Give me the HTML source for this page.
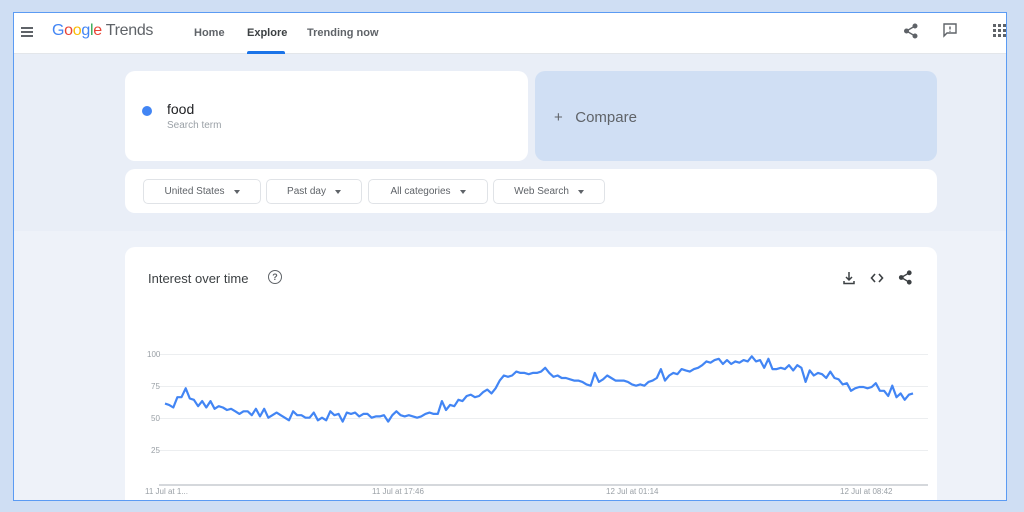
<!DOCTYPE html>
<html><head><meta charset="utf-8"><style>
*{box-sizing:border-box;margin:0;padding:0}
body{width:1024px;height:512px;background:#cfdef3;font-family:"Liberation Sans",sans-serif;position:relative;overflow:hidden}
#frame{position:absolute;left:13px;top:12px;width:994px;height:489px;border:1px solid #5b9bf3;background:#eef2f9;overflow:hidden}
#hdr{position:absolute;left:0;top:0;width:100%;height:41px;background:#fff;border-bottom:1px solid #e3e6ea}
#top{position:absolute;left:0;top:41px;width:100%;height:177px;background:#e9eef7}
.abs{position:absolute}
.nav{position:absolute;top:14px;font-size:11px;color:#5f6368;font-weight:bold}
.card{position:absolute;background:#fff;border-radius:10px}
.btn{position:absolute;top:166px;height:25px;border:1px solid #e0e3e7;border-radius:5px;font-size:10px;color:#5f6368;display:flex;align-items:center;justify-content:center}
.btn:after{content:"";border:3.5px solid transparent;border-top:4px solid #5f6368;margin-left:9px;margin-top:4px}
.ax{position:absolute;font-size:8px;color:#9aa0a6}
.gl{position:absolute;left:145px;width:769px;height:1px;background:#eceef0}
</style></head><body>
<div id="frame">
<div id="hdr">
 <div class="abs" style="left:7px;top:14px;width:12px;height:2px;background:#5f6368;box-shadow:0 4px 0 #5f6368,0 8px 0 #5f6368"></div>
 <div class="abs" style="left:38px;top:9px;font-size:16px;letter-spacing:-0.3px"><span style="color:#4285f4">G</span><span style="color:#ea4335">o</span><span style="color:#fbbc05">o</span><span style="color:#4285f4">g</span><span style="color:#34a853">l</span><span style="color:#ea4335">e</span> <span style="color:#5f6368">Trends</span></div>
 <div class="nav" style="left:180px">Home</div>
 <div class="nav" style="left:233px;color:#3c4043">Explore</div>
 <div class="abs" style="left:233px;top:38px;width:38px;height:3px;background:#1a73e8;border-radius:2px 2px 0 0"></div>
 <div class="nav" style="left:293px">Trending now</div>
 <svg class="abs" style="left:889px;top:10px" width="16" height="16" viewBox="0 0 16 16" fill="none" stroke="#5f6368" stroke-width="1.4"><circle cx="12" cy="3" r="1.8" fill="#5f6368"/><circle cx="3.5" cy="8" r="1.8" fill="#5f6368"/><circle cx="12" cy="13" r="1.8" fill="#5f6368"/><path d="M12 3L3.5 8 12 13"/></svg>
 <svg class="abs" style="left:928px;top:9px" width="16" height="16" viewBox="0 0 16 16" fill="none" stroke="#5f6368" stroke-width="1.4"><path d="M2 2h12v9H5l-3 3z"/><path d="M8 4.5v3M8 8.8v1" /></svg>
 <svg class="abs" style="left:979px;top:11px" width="14" height="14" viewBox="0 0 14 14" fill="#5f6368"><rect x="0" y="0" width="3" height="3"/><rect x="5" y="0" width="3" height="3"/><rect x="10" y="0" width="3" height="3"/><rect x="0" y="5" width="3" height="3"/><rect x="5" y="5" width="3" height="3"/><rect x="10" y="5" width="3" height="3"/><rect x="0" y="10" width="3" height="3"/><rect x="5" y="10" width="3" height="3"/><rect x="10" y="10" width="3" height="3"/></svg>
</div>
<div id="top"></div>
<div class="card" style="left:111px;top:58px;width:403px;height:90px"></div>
<div class="abs" style="left:128px;top:93px;width:10px;height:10px;border-radius:50%;background:#4285f4"></div>
<div class="abs" style="left:153px;top:88px;font-size:14px;color:#202124">food</div>
<div class="abs" style="left:153px;top:107px;font-size:10px;color:#9aa0a6">Search term</div>
<div class="abs" style="left:521px;top:58px;width:402px;height:90px;background:#d0dff4;border-radius:10px"></div>
<div class="abs" style="left:540px;top:96px;font-size:15px;color:#5f6368">+&nbsp;&nbsp;&nbsp;Compare</div>
<div class="card" style="left:111px;top:156px;width:812px;height:44px"></div>
<div class="btn" style="left:129px;width:118px">United States</div>
<div class="btn" style="left:252px;width:96px">Past day</div>
<div class="btn" style="left:354px;width:120px">All categories</div>
<div class="btn" style="left:479px;width:112px">Web Search</div>
<div class="card" style="left:111px;top:234px;width:812px;height:270px"></div>
<div class="abs" style="left:134px;top:258px;font-size:13px;color:#3c4043">Interest over time</div>
<div class="abs" style="left:254px;top:257px;width:14px;height:14px;border:1.3px solid #5f6368;border-radius:50%;font-size:9px;color:#5f6368;text-align:center;line-height:12px;font-weight:bold">?</div>
<svg class="abs" style="left:828px;top:258px" width="14" height="14" viewBox="0 0 14 14" fill="none" stroke="#3c4043" stroke-width="1.5"><path d="M7 1v8M4 6l3 3 3-3M2 10v2.5h10V10"/></svg>
<svg class="abs" style="left:856px;top:259px" width="14" height="12" viewBox="0 0 14 12" fill="none" stroke="#3c4043" stroke-width="1.6"><path d="M5 2L1.5 6 5 10M9 2l3.5 4L9 10"/></svg>
<svg class="abs" style="left:884px;top:257px" width="15" height="15" viewBox="0 0 16 16" fill="none" stroke="#3c4043" stroke-width="1.5"><circle cx="12" cy="3" r="1.8" fill="#3c4043"/><circle cx="3.5" cy="8" r="1.8" fill="#3c4043"/><circle cx="12" cy="13" r="1.8" fill="#3c4043"/><path d="M12 3L3.5 8 12 13"/></svg>
<div class="gl" style="top:341px"></div><div class="gl" style="top:373px"></div><div class="gl" style="top:405px"></div><div class="gl" style="top:437px"></div>
<div class="gl" style="top:471px;background:#d5d8dc;height:2px"></div>
<div class="ax" style="left:133px;top:337px">100</div>
<div class="ax" style="left:137px;top:369px">75</div>
<div class="ax" style="left:137px;top:401px">50</div>
<div class="ax" style="left:137px;top:433px">25</div>
<div class="ax" style="left:131px;top:474px">11 Jul at 1...</div>
<div class="ax" style="left:358px;top:474px">11 Jul at 17:46</div>
<div class="ax" style="left:592px;top:474px">12 Jul at 01:14</div>
<div class="ax" style="left:826px;top:474px">12 Jul at 08:42</div>
<svg class="abs" style="left:0;top:0" width="994" height="489"><polyline id="pl" fill="none" stroke="#4285f4" stroke-width="2.2" stroke-linejoin="round"/></svg>
</div>
<script>
var v=[62,61,59,67,67,74,66,65,60,64,59,64,58,60,59,57,58,56,54,56,56,53,58,52,58,51,53,55,53,51,49,56,53,53,51,51,55,49,51,49,56,53,54,48,55,54,55,52,54,54,51,52,52,53,48,53,56,53,52,53,52,51,52,54,55,54,54,64,57,61,60,65,64,68,69,67,68,71,73,70,74,80,84,83,84,87,86,86,85,86,86,87,90,86,83,84,82,82,81,80,80,79,77,76,86,79,81,84,82,80,80,80,79,77,76,77,76,79,80,82,89,80,84,86,85,89,88,87,89,90,92,95,94,96,97,93,96,93,95,94,96,95,99,95,96,90,97,89,89,90,89,92,88,92,90,79,88,84,86,85,82,87,82,81,77,78,72,74,75,75,74,75,78,72,72,68,76,67,70,65,69,70];
var p=[],n=v.length;for(var i=0;i<n;i++){var x=151+i*(748/(n-1));var y=470-v[i]*1.28;p.push(x.toFixed(1)+","+y.toFixed(1));}
document.getElementById("pl").setAttribute("points",p.join(" "));
</script>
</body></html>
